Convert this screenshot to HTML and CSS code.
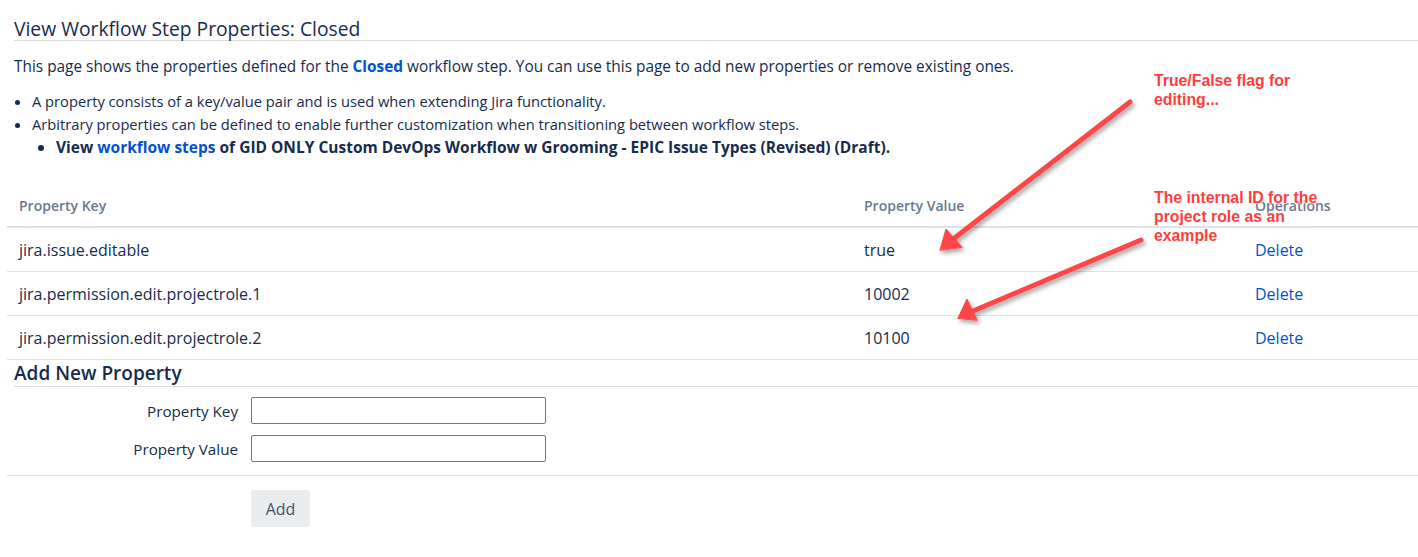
FILE: index.html
```html
<!DOCTYPE html>
<html lang="en">

<head>
  <meta charset="UTF-8">
  <title>View Workflow Step Properties: Closed</title>
  <link rel="stylesheet" href="styles.css">
</head>

<body>
  <div class="page">
    <h2 class="page-title">View Workflow Step Properties: Closed</h2>
    <p class="intro">This page shows the properties defined for the <a href="#" class="strong-link">Closed</a> workflow step. You can use this page to add new properties or remove existing ones.</p>
    <ul class="notes">
      <li>A property consists of a key/value pair and is used when extending Jira functionality.</li>
      <li>Arbitrary properties can be defined to enable further customization when transitioning between workflow steps.
        <ul class="sub-notes">
          <li>View <a href="#">workflow steps</a> of GID ONLY Custom DevOps Workflow w Grooming - EPIC Issue Types (Revised) (Draft).</li>
        </ul>
      </li>
    </ul>

    <table class="props">
      <thead>
        <tr>
          <th class="col-key">Property Key</th>
          <th class="col-value">Property Value</th>
          <th class="col-ops">Operations</th>
        </tr>
      </thead>
      <tbody>
        <tr>
          <td>jira.issue.editable</td>
          <td>true</td>
          <td><a href="#">Delete</a></td>
        </tr>
        <tr>
          <td>jira.permission.edit.projectrole.1</td>
          <td>10002</td>
          <td><a href="#">Delete</a></td>
        </tr>
        <tr>
          <td>jira.permission.edit.projectrole.2</td>
          <td>10100</td>
          <td><a href="#">Delete</a></td>
        </tr>
      </tbody>
    </table>

    <form class="add-form">
      <h3 class="form-title">Add New Property</h3>
      <div class="field">
        <label for="propKey">Property Key</label>
        <input type="text" id="propKey">
      </div>
      <div class="field">
        <label for="propValue">Property Value</label>
        <input type="text" id="propValue">
      </div>
      <div class="buttons">
        <button type="button">Add</button>
      </div>
    </form>
  </div>

  <!-- annotations drawn over the screenshot -->
  <div class="note note-flag">True/False flag for<br>editing...</div>
  <div class="note note-id">The internal ID for the<br>project role as an<br>example</div>
  <svg class="arrows" width="1418" height="557" viewBox="0 0 1418 557">
    <defs>
      <filter id="shadow" x="-20%" y="-20%" width="140%" height="140%">
        <feDropShadow dx="2" dy="3" stdDeviation="2" flood-color="#000" flood-opacity="0.35"/>
      </filter>
    </defs>
    <g filter="url(#shadow)" fill="#ff4545" stroke="#ff4545" stroke-linecap="round">
      <line x1="1130" y1="102" x2="952" y2="240" stroke-width="5"/>
      <polygon points="940,250 946,229 962,247" stroke-width="1" stroke-linejoin="round"/>
      <line x1="1141" y1="240" x2="973" y2="311" stroke-width="5"/>
      <polygon points="958,318 967,299 977,320" stroke-width="1" stroke-linejoin="round"/>
    </g>
  </svg>
</body>

</html>
```

FILE: styles.css
```css
body {
  margin: 0;
  padding: 0;
  font-family: "Open Sans", "Noto Sans", sans-serif;
  font-size: 15px;
  color: #172b4d;
  background: #fff;
}

a {
  color: #0052cc;
  text-decoration: none;
}

.page {
  padding: 0 0 0 7px;
}

.page-title {
  margin: 18px 0 0 7px;
  padding-bottom: 0;
  font-size: 19.3px;
  font-weight: 400;
  line-height: 22px;
  border-bottom: 1px solid #dcdcdc;
}

.intro {
  margin: 15px 0 0 7px;
  font-size: 15.4px;
}

.strong-link {
  font-weight: 700;
}

.notes {
  margin: 13px 0 0 7px;
  padding-left: 18px;
  font-size: 14.7px;
  line-height: 23px;
}

.sub-notes {
  margin: 0;
  padding-left: 24px;
  list-style: disc;
  font-size: 15.5px;
  font-weight: 700;
}

/* property table */
.props {
  width: 100%;
  margin-top: 30px;
  border-collapse: collapse;
  font-size: 16px;
}

.props th {
  text-align: left;
  font-size: 14px;
  font-weight: 600;
  color: #6b778c;
  padding: 7px 12px 11px;
  border-bottom: 2px solid #dfe1e6;
}

.props td {
  height: 43px;
  padding: 0 12px;
  border-bottom: 1px solid #dfe1e6;
}

.col-key {
  width: 821px;
}

.col-value {
  width: 367px;
}

/* add property form */
.form-title {
  margin: 1px 0 0 7px;
  font-size: 19px;
  font-weight: 600;
  line-height: 25px;
  border-bottom: 1px solid #dcdcdc;
}

.field {
  display: flex;
  align-items: center;
  gap: 13px;
  margin-top: 10px;
}

.field + .field {
  margin-top: 11px;
}

.field label {
  width: 231px;
  text-align: right;
  font-size: 15.2px;
}

.field input {
  width: 291px;
  height: 23px;
  border: 1px solid #767676;
  border-radius: 2px;
  padding: 1px;
  margin: 0;
}

.buttons {
  margin-top: 13px;
  padding: 14px 0 0 244px;
  border-top: 1px solid #dcdcdc;
}

.buttons button {
  font: inherit;
  font-size: 16px;
  color: #42526e;
  background: #ebecf0;
  border: 0;
  border-radius: 3px;
  width: 59px;
  height: 37px;
}

/* red annotations */
.note {
  position: absolute;
  left: 1154px;
  font-family: "Liberation Sans", Arial, sans-serif;
  font-weight: 700;
  font-size: 15.8px;
  line-height: 19px;
  color: #ff3d3d;
  text-shadow: 0 0 2px #fff, 0 0 2px #fff, 0 0 3px #fff;
}

.note-flag {
  top: 71px;
}

.note-id {
  top: 188px;
}

.arrows {
  position: absolute;
  left: 0;
  top: 0;
  pointer-events: none;
}
```
